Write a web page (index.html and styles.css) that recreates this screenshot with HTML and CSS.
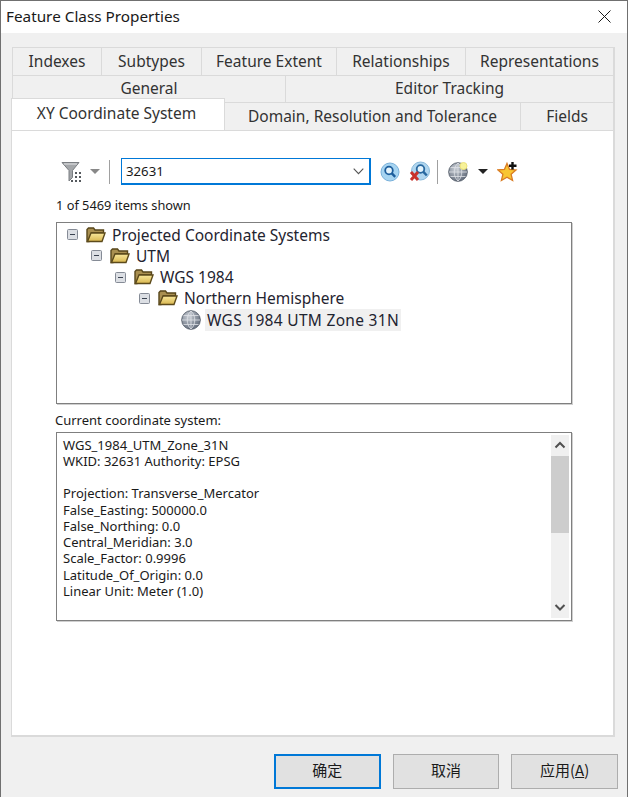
FILE: index.html
```html
<!DOCTYPE html>
<html lang="en">
<head>
<meta charset="utf-8">
<title>Feature Class Properties</title>
<link rel="stylesheet" href="styles.css">
</head>
<body>
<svg class="defs" width="0" height="0" aria-hidden="true">
  <defs>
    <linearGradient id="fold" x1="0" y1="0" x2="0" y2="1"><stop offset="0" stop-color="#f9e89c"/><stop offset="1" stop-color="#d8b64f"/></linearGradient>
    <radialGradient id="glb" cx=".38" cy=".32" r=".8"><stop offset="0" stop-color="#c9ced5"/><stop offset="1" stop-color="#566070"/></radialGradient>
    <symbol id="folder" viewBox="0 0 20 16">
      <path d="M1 14.500V2.500L2.500 1h5L9 3h8.500v3H5.500L3 14.500z" fill="#a98f50" stroke="#57461a" stroke-width="1.400"/>
      <path d="M1.500 14.500L5 6h14l-3 8.500z" fill="url(#fold)" stroke="#5c4a1b" stroke-width="1.400"/>
    </symbol>
    <symbol id="minus" viewBox="0 0 11 11">
      <rect x=".5" y=".5" width="10" height="10" rx="1" fill="#dcdfe4" stroke="#858b96"/>
      <path d="M3 5.500h5" stroke="#3a4250"/>
    </symbol>
    <symbol id="globe" viewBox="0 0 20 20">
      <circle cx="10" cy="10" r="9.300" fill="url(#glb)" stroke="#5e6672"/>
      <path d="M1 10h18M2.500 5.500h15M2.500 14.500h15M10 1v18M10 1c-5 4-5 14 0 18M10 1c5 4 5 14 0 18" fill="none" stroke="#dfe2e7" stroke-width=".8"/>
    </symbol>
  </defs>
</svg>
<div class="window">
  <header class="titlebar">
    <span class="title">Feature Class Properties</span>
    <svg class="close" width="13" height="13" viewBox="0 0 13 13"><path d="M.5.5l12 12M12.500.5l-12 12" stroke="#1a1a1a" fill="none"/></svg>
  </header>
  <div class="body">
    <nav class="tabs">
      <div class="tabrow">
        <span class="tab w89">Indexes</span><span class="tab w100">Subtypes</span><span class="tab w135">Feature Extent</span><span class="tab w129">Relationships</span><span class="tab grow">Representations</span>
      </div>
      <div class="tabrow">
        <span class="tab w274">General</span><span class="tab grow">Editor Tracking</span>
      </div>
      <div class="tabrow tabrow-last">
        <span class="tab tab-active">XY Coordinate System</span><span class="tab w296">Domain, Resolution and Tolerance</span><span class="tab grow">Fields</span>
      </div>
    </nav>
    <main class="panel">
      <div class="toolbar">
        <svg class="ico-filter" width="22" height="23" viewBox="0 0 22 23">
          <path d="M1 1.500h17l-6.500 8v7L8 20V9.500z" fill="#a4a7aa" stroke="#7a7e82"/>
          <path d="M3 3h13" stroke="#e2e3e5"/>
          <g fill="#55595d"><rect x="14" y="11" width="2" height="2"/><rect x="18" y="11" width="2" height="2"/><rect x="14" y="15" width="2" height="2"/><rect x="18" y="15" width="2" height="2"/><rect x="14" y="19" width="2" height="2"/><rect x="18" y="19" width="2" height="2"/><rect x="10" y="19" width="2" height="2"/></g>
        </svg>
        <span class="caret caret-gray"></span>
        <span class="sep"></span>
        <div class="combo">
          <span>32631</span>
          <svg width="11" height="7" viewBox="0 0 11 7"><path d="M.7.700l4.800 5 4.800-5" fill="none" stroke="#555" stroke-width="1.100"/></svg>
        </div>
        <svg class="ico-search" width="20" height="20" viewBox="0 0 20 20">
          <circle cx="10" cy="10" r="9" fill="#a6d4f1" stroke="#78b0da"/>
          <circle cx="9" cy="8.500" r="3.800" fill="#e4f3fb" stroke="#1c5d9c" stroke-width="1.800"/>
          <path d="M11.600 11.200l3.600 3.600" stroke="#1c5d9c" stroke-width="2.400"/>
        </svg>
        <svg class="ico-clear" width="21" height="21" viewBox="0 0 21 21">
          <circle cx="11.500" cy="10" r="9" fill="#b0d6ef" stroke="#88b9da"/>
          <circle cx="11.500" cy="8" r="3.800" fill="#e4f3fb" stroke="#28689f" stroke-width="1.800"/>
          <path d="M14.200 10.700l3.600 3.800" stroke="#28689f" stroke-width="2.400"/>
          <path d="M2 11l7 8M9 11l-7 8" stroke="#c8322c" stroke-width="3"/>
        </svg>
        <span class="sep sep-b"></span>
        <svg class="ico-globe" width="22" height="22" viewBox="0 0 22 22">
          <use href="#globe" x="0" y="1" width="20" height="20"/>
          <circle cx="15.500" cy="5" r="3.500" fill="#f7f29a" stroke="#ece27a"/>
        </svg>
        <span class="caret caret-dark"></span>
        <svg class="ico-star" width="21" height="21" viewBox="0 0 21 21">
          <path d="M10 2.500l2.500 5.800 6.500.6-4.900 4.300 1.500 6.300L10 16.200l-5.600 3.300 1.500-6.300L1 8.900l6.500-.6z" fill="#f8c631" stroke="#d97c24" stroke-width="1.300"/>
          <path d="M15.500 1v7.500M12 4.700h7.500" stroke="#111" stroke-width="2.400"/>
        </svg>
      </div>
      <p class="count">1 of 5469 items shown</p>
      <div class="tree">
        <div class="node l0"><svg class="minus"><use href="#minus"/></svg><svg class="folder"><use href="#folder"/></svg><span>Projected Coordinate Systems</span></div>
        <div class="node l1"><svg class="minus"><use href="#minus"/></svg><svg class="folder"><use href="#folder"/></svg><span>UTM</span></div>
        <div class="node l2"><svg class="minus"><use href="#minus"/></svg><svg class="folder"><use href="#folder"/></svg><span>WGS 1984</span></div>
        <div class="node l3"><svg class="minus"><use href="#minus"/></svg><svg class="folder"><use href="#folder"/></svg><span>Northern Hemisphere</span></div>
        <div class="node l4"><svg class="leaf"><use href="#globe"/></svg><span class="selected">WGS 1984 UTM Zone 31N</span></div>
      </div>
      <p class="current">Current coordinate system:</p>
      <div class="details">
        <div class="details-text">
          <div>WGS_1984_UTM_Zone_31N</div>
          <div>WKID: 32631 Authority: EPSG</div>
          <div class="blank"></div>
          <div>Projection: Transverse_Mercator</div>
          <div>False_Easting: 500000.0</div>
          <div>False_Northing: 0.0</div>
          <div>Central_Meridian: 3.0</div>
          <div>Scale_Factor: 0.9996</div>
          <div>Latitude_Of_Origin: 0.0</div>
          <div>Linear Unit: Meter (1.0)</div>
        </div>
        <div class="scrollbar">
          <svg class="arrow" width="18" height="21" viewBox="0 0 18 21"><path d="M4.500 12.500L9 8l4.500 4.500" fill="none" stroke="#505050" stroke-width="2"/></svg>
          <div class="thumb"></div>
          <div class="track"></div>
          <svg class="arrow" width="18" height="21" viewBox="0 0 18 21"><path d="M4.500 8L9 12.500 13.500 8" fill="none" stroke="#505050" stroke-width="2"/></svg>
        </div>
      </div>
    </main>
    <footer class="buttons">
      <button class="btn btn-default"><span>确定</span></button>
      <button class="btn"><span>取消</span></button>
      <button class="btn"><span>应用(<u>A</u>)</span></button>
    </footer>
  </div>
</div>
</body>
</html>
```
FILE: styles.css
```css
* { box-sizing: border-box; }
html, body { margin: 0; padding: 0; }
body {
  width: 628px;
  height: 797px;
  overflow: hidden;
  font-family: "Noto Sans", "Noto Sans CJK SC", sans-serif;
  color: #1a1a1a;
  background: #f0f0f0;
}
.defs { position: absolute; }
.window {
  width: 628px;
  height: 797px;
  border: 1px solid #707070;
  border-bottom: 0;
  display: flex;
  flex-direction: column;
}
.titlebar {
  height: 32px;
  background: #fff;
  display: flex;
  align-items: center;
  justify-content: space-between;
  padding: 0 16px 0 5px;
  flex: none;
}
.title { font-size: 15.300px; line-height: 30px; padding-bottom: 2px; }
.close { display: block; margin-top: -2px; }
.body {
  flex: 1;
  background: #f0f0f0;
  padding: 14px 9px 0 10px;
  display: flex;
  flex-direction: column;
}
.tabs { padding: 0 3px 0 1px; font-size: 15.500px; flex: none; }
.tabrow { display: flex; height: 27.500px; }
.tab {
  display: flex;
  align-items: center;
  justify-content: center;
  background: #f0f0f0;
  border: 1px solid #dadada;
  border-bottom: 0;
  color: #333;
  margin-left: -1px;
  padding-bottom: 1px;
}
.tabrow .tab:first-child { margin-left: 0; }
.w89 { width: 90px; }
.w100 { width: 101px; }
.w135 { width: 136px; }
.w129 { width: 130px; }
.w274 { width: 274px; }
.w296 { width: 297px; }
.grow { flex: 1; border-right: 2px solid #dadada; }
.tabrow-last { position: relative; z-index: 1; height: 28px; }
.tab-active {
  width: 214px;
  height: 32px;
  margin: -4px 0 -1px -1px !important;
  background: #fff;
  border-color: #dadada;
  padding: 0 3px 4px 0;
  position: relative;
  z-index: 2;
}
.panel {
  background: #fff;
  border: 1px solid #dadada;
  border-width: 1px 2px 2px 1px;
  width: 604px;
  height: 607px;
  flex: none;
  padding: 27px 0 0 44px;
}
.toolbar { display: flex; align-items: center; height: 27px; }
.ico-filter { margin-left: 5px; margin-top: 2px; flex: none; }
.caret { width: 0; height: 0; border: 5px solid transparent; border-bottom: 0; flex: none; }
.caret-gray { border-top-color: #888; margin-left: 7px; }
.caret-dark { border-top-color: #222; margin-left: 8px; }
.sep { width: 1px; height: 24px; background: #a0a0a0; margin-left: 9px; flex: none; }
.combo {
  width: 250px;
  height: 27px;
  border: 2px solid #0078d7;
  border-width: 1px 2px 2px 1px;
  margin-left: 11px;
  padding: 0 5px 0 4px;
  display: flex;
  align-items: center;
  justify-content: space-between;
  font-size: 13.200px;
  flex: none;
}
.ico-search { margin-left: 9px; flex: none; }
.ico-clear { margin-left: 9px; flex: none; }
.sep-b { margin-left: 7px; }
.ico-globe { margin-left: 10px; flex: none; }
.ico-star { margin-left: 9px; flex: none; }
.count { margin: 12px 0 0; font-size: 12.800px; line-height: 17px; }
.tree {
  width: 516px;
  height: 182px;
  margin-top: 8px;
  border: 1px solid #7f7f7f;
  box-shadow: 1px 1px 0 #cfcfcf;
  padding-top: 1px;
  background: #fff;
}
.node { display: flex; align-items: center; height: 21.250px; font-size: 15.500px; color: #1f2430; }
.l0 { padding-left: 10px; }
.l1 { padding-left: 34px; }
.l2 { padding-left: 58px; }
.l3 { padding-left: 82px; }
.l4 { padding-left: 124px; }
.minus { width: 11px; height: 11px; flex: none; }
.folder { width: 20px; height: 16px; margin-left: 8px; margin-right: 6px; flex: none; }
.leaf { width: 20px; height: 20px; margin-right: 4px; flex: none; }
.selected { background: #f0f0f0; padding: 0 2px; height: 22px; line-height: 22px; letter-spacing: .3px; }
.current { margin: 8px 0 0 -1px; font-size: 13px; line-height: 17px; }
.details {
  width: 516px;
  height: 189px;
  margin-top: 3px;
  border: 1px solid #7f7f7f;
  box-shadow: 1px 1px 0 #cfcfcf;
  padding: 2px 2px 2px 0;
  display: flex;
  justify-content: space-between;
  background: #fff;
}
.details-text { padding: 1.500px 0 0 6px; font-size: 13px; line-height: 16.250px; }
.blank { height: 16.250px; }
.scrollbar { width: 18px; background: #f0f0f0; display: flex; flex-direction: column; flex: none; }
.arrow { display: block; flex: none; }
.thumb { height: 77px; background: #cdcdcd; flex: none; }
.track { flex: 1; }
.buttons { display: flex; gap: 12px; padding: 17px 0 0 263px; flex: none; }
.btn {
  width: 107px;
  height: 35px;
  background: #e1e1e1;
  border: 1px solid #adadad;
  font-family: "Noto Sans CJK SC", "Noto Sans", sans-serif;
  font-size: 15px;
  line-height: 20px;
  color: #1a1a1a;
  padding: 0 0 3px;
}
.btn-default { border: 2px solid #0078d7; }
```
